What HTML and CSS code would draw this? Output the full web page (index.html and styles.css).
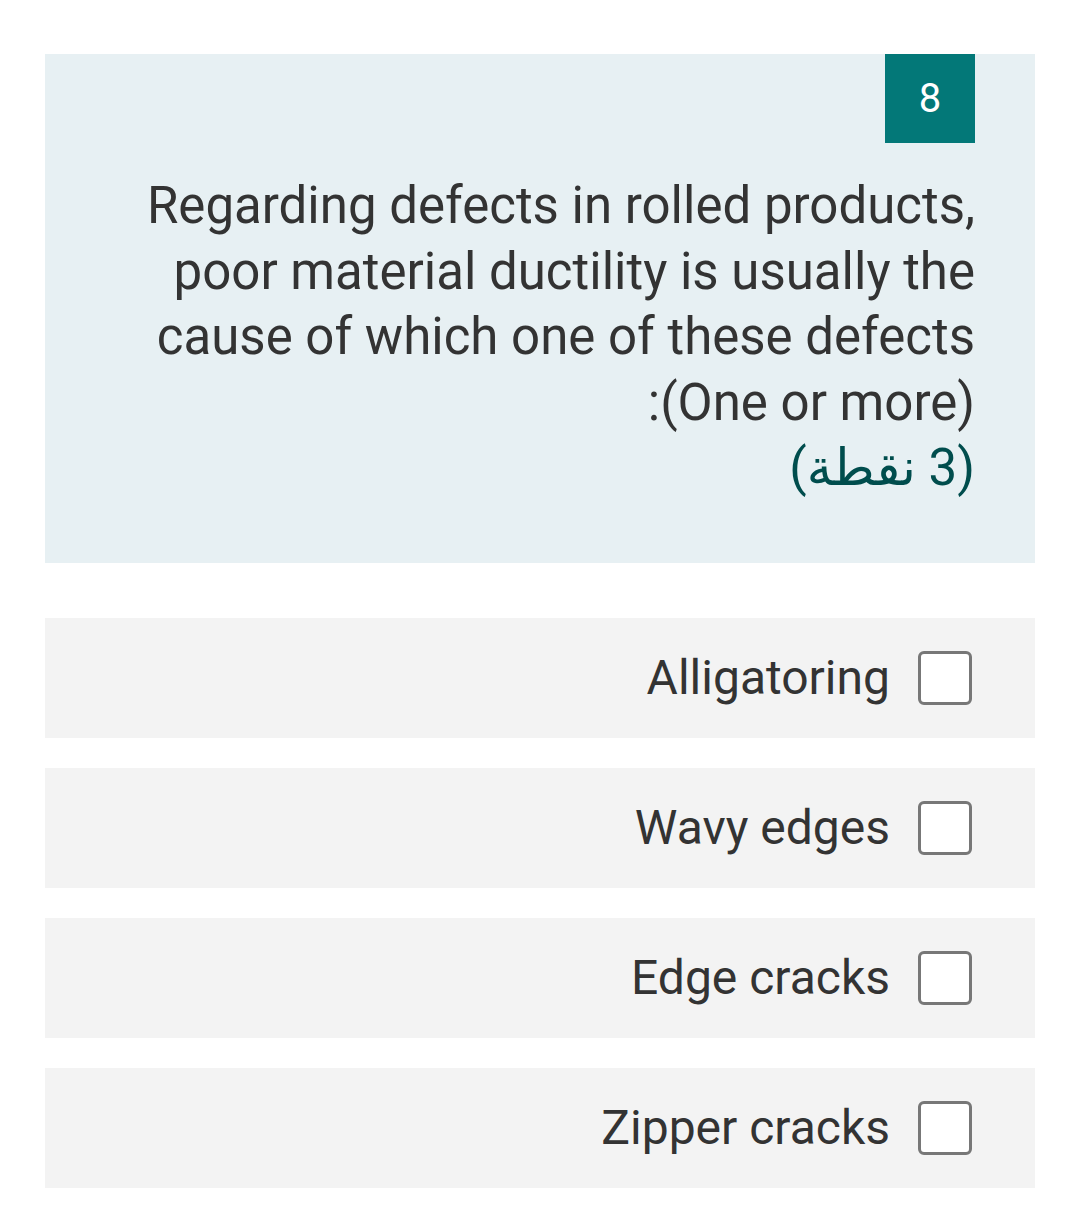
FILE: index.html
```html
<!DOCTYPE html>
<html lang="en" dir="rtl">
<head>
<meta charset="utf-8">
<link rel="stylesheet" href="styles.css">
</head>
<body>
<div class="page">
  <div class="question">
    <div class="badge-row"><div class="badge">8</div></div>
    <div class="qtext">Regarding defects in rolled products, poor material ductility is usually the cause of which one of these defects (One or more):</div>
    <div class="points">(3 نقطة)</div>
  </div>
  <div class="options">
    <label class="option"><span class="box"></span><span class="label">Alligatoring</span></label>
    <label class="option"><span class="box"></span><span class="label">Wavy edges</span></label>
    <label class="option"><span class="box"></span><span class="label">Edge cracks</span></label>
    <label class="option"><span class="box"></span><span class="label">Zipper cracks</span></label>
  </div>
</div>
</body>
</html>
```
FILE: styles.css
```css
html, body { margin: 0; padding: 0; background: #fff; }
body { font-family: Roboto, "DejaVu Sans", sans-serif; color: #333; }
.page { padding: 54px 45px 0 45px; }
.question {
  background: #e7f0f3;
  padding: 0 60px 62px 60px;
}
.badge-row { display: flex; }
.badge {
  width: 90px; height: 89px;
  background: #037878; color: #fff;
  font-size: 40px; display: flex; align-items: center; justify-content: center;
}
.qtext {
  margin-top: 30px;
  font-size: 51px; line-height: 65.5px; text-align: right;
}
.points {
  font-size: 51px; line-height: 65.5px; height: 65.5px; color: #004d4d; text-align: right;
}
.options { display: flex; flex-direction: column; gap: 30px; margin-top: 55px; }
.option {
  height: 120px; background: #f3f3f3;
  display: flex; align-items: center; gap: 28px;
  padding-right: 63px;
}
.box {
  width: 48px; height: 48px; border: 3px solid #777; border-radius: 6px; background: #fff; flex: none;
}
.label { font-size: 48px; }
```
